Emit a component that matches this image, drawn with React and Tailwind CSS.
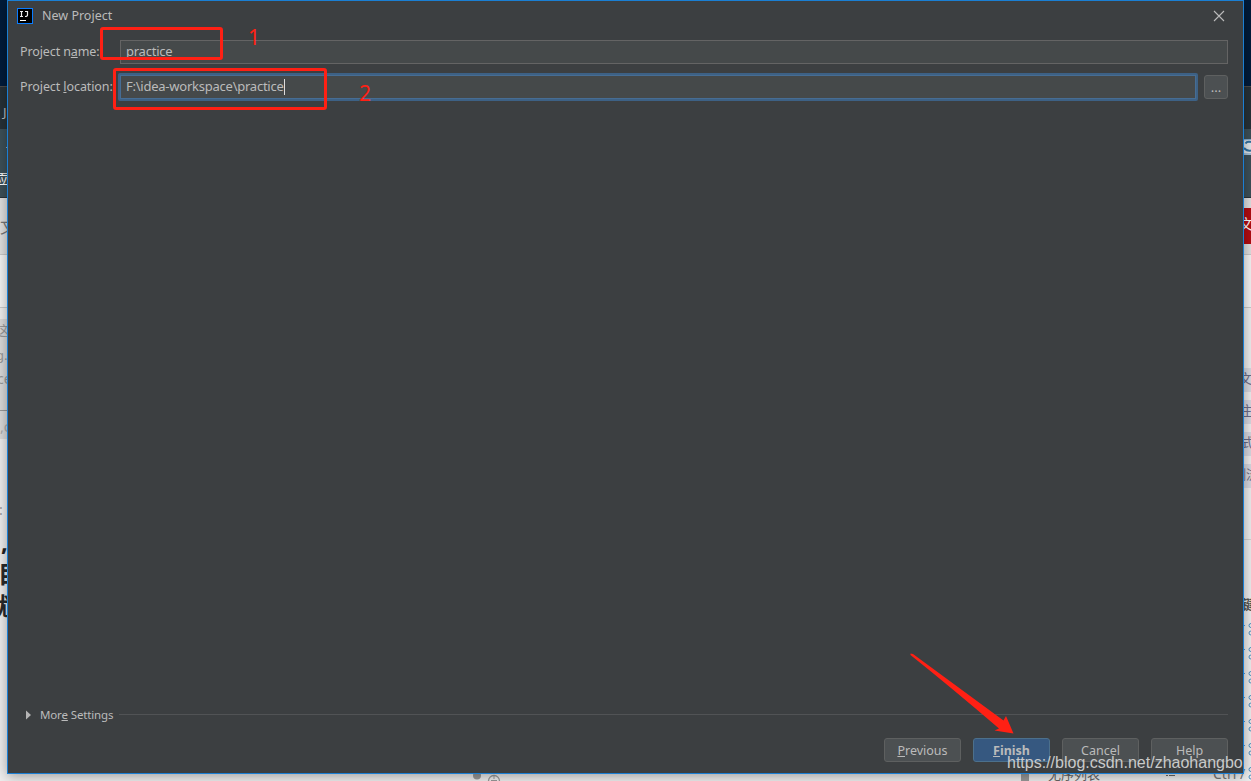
import React, { useState } from "react";

// bands of the browser page behind the dialog
const bands = [
    "h-[86px] bg-[#001b3a]",
    "h-[43px] bg-[#263137] border-t border-[#4a4a4a]",
    "h-[68px] bg-[#3d5058]",
    "h-px bg-[#2a3338]",
    "h-[56px] bg-[#e0e0e0]",
    "h-[53px] bg-[#f4f4f4] border-t border-[#c9c9c9]",
    "h-[474px] bg-[#eeeeee] border-t border-[#cacaca]",
];

// bits of page text that stick out on both sides
const pieces = [
    { text: "J", cls: "left-[3px] top-[104px] text-[13px] text-[#b8bcbe]" },
    { text: "应", cls: "left-[-5px] top-[171px] text-[13px] text-white" },
    { text: "文", cls: "left-[0px] top-[219px] text-[17px] text-[#777]" },
    { text: "这", cls: "left-[-4px] top-[322px] text-[13px] text-[#999]" },
    { text: "g.", cls: "left-[-4px] top-[347px] text-[13px] text-[#999]" },
    { text: "ce", cls: "left-[-3px] top-[371px] text-[14px] text-[#999]" },
    { text: ",c", cls: "left-[0px] top-[419px] text-[14px] text-[#aaa]" },
    { text: ":", cls: "left-[-1px] top-[502px] text-[14px] text-[#999]" },
    { text: ",", cls: "left-[1px] top-[534px] text-[24px] font-bold text-[#222]" },
    { text: "目", cls: "left-[-2px] top-[566px] text-[24px] font-bold text-[#2a2a2a]" },
    { text: "就", cls: "left-[-14px] top-[598px] text-[24px] font-bold text-[#2a2a2a]" },
    { text: "文", cls: "left-[1239px] top-[216px] text-[14px] text-white" },
    { text: "文", cls: "left-[1239px] top-[370px] text-[13px] text-[#6b6b85]" },
    { text: "注", cls: "left-[1239px] top-[402px] text-[13px] text-[#6b6b85]" },
    { text: "式", cls: "left-[1241px] top-[434px] text-[13px] text-[#6b6b85]" },
    { text: "测", cls: "left-[1233px] top-[466px] text-[13px] text-[#6b6b85]" },
    { text: "流", cls: "left-[1246px] top-[466px] text-[13px] text-[#6b6b85]" },
    { text: "键", cls: "left-[1242px] top-[596px] text-[13px] font-bold text-[#555]" },
    { text: "无序列表", cls: "left-[1048px] top-[766px] text-[13px] text-[#666]" },
    { text: "Ctrl /", cls: "left-[1213px] top-[766px] text-[14px] text-[#777]" },
];

const links = [
    "top-[622px]",
    "top-[646px]",
    "top-[670px]",
    "top-[694px]",
    "top-[718px]",
    "top-[742px]",
    "top-[766px]",
];

function Backdrop() {
    return (
        <div className="absolute inset-0 overflow-hidden whitespace-nowrap leading-4">
            <div className="flex h-full flex-col">
                {bands.map((b) => (
                    <div key={b} className={`shrink-0 ${b}`} />
                ))}
            </div>
            <div className="absolute left-0 top-[319px] h-[120px] w-2 bg-[#dadada]" />
            <div className="absolute left-0 top-[410px] h-px w-2 bg-[#999]" />
            <div className="absolute left-0 top-[173px] h-px w-2 bg-[#d8dcdd]" />
            <div className="absolute left-0 top-[184px] h-px w-2 bg-[#d8dcdd]" />
            <div className="absolute left-[6px] top-[147px] h-px w-2 bg-[#a2abae]" />
            <div className="absolute left-[1244px] top-[208px] h-9 w-2 bg-[#b20c12]" />
            <div className="absolute left-[1244px] top-[368px] h-6 w-2 bg-[#d7d9e0]" />
            <div className="absolute left-[1244px] top-[400px] h-6 w-2 bg-[#d7d9e0]" />
            <div className="absolute left-[1244px] top-[432px] h-6 w-2 bg-[#d7d9e0]" />
            <div className="absolute left-[1244px] top-[464px] h-6 w-2 bg-[#d7d9e0]" />
            <div className="absolute left-[1244px] top-[539px] h-px w-2 bg-[#d3d3d3]" />
            <svg className="absolute left-[1244px] top-[139px]" width="7" height="16">
                <path d="M0 0h7v16H0z" fill="#dfe6ea" />
                <path d="M0 .7h7M0 15h7" stroke="#6d9bc2" strokeWidth="1" />
                <path d="M7 3Q3 2 1.5 4.5M0 9Q3 12.5 7 11.5" fill="none" stroke="#33719f" strokeWidth="2" />
            </svg>
            {pieces.map((p) => (
                <span key={p.cls} className={`absolute ${p.cls}`}>
                    {p.text}
                </span>
            ))}
            {links.map((top) => (
                <svg key={top} className={`absolute left-[1243px] ${top}`} width="8" height="16" fill="none">
                    <path d="M0 3.5h2" stroke="#5599d0" />
                    <circle cx="8" cy="3.5" r="2" stroke="#4f8fc0" />
                    <circle cx="8" cy="11" r="2" stroke="#4f8fc0" />
                </svg>
            ))}
            <svg className="absolute left-[472px] top-[771px]" width="30" height="10" fill="none">
                <circle cx="5" cy="4.5" r="4" fill="#999" />
                <circle cx="22" cy="10" r="5.5" stroke="#999" strokeWidth="1.3" />
                <path d="M22 4v4M19 9.5h6" stroke="#999" />
            </svg>
            <div className="absolute left-[1021px] top-[770px] h-3 w-2 bg-[#999]" />
            <svg className="absolute left-[1165px] top-[774px]" width="12" height="5" stroke="#666">
                <path d="M1 1.5h2M4 1.5h6" />
            </svg>
        </div>
    );
}

function DialogButton({ primary, children }) {
    return (
        <button
            className={
                "h-6 w-[77px] rounded-[3px] border pt-px text-[12.5px] leading-[22px] " +
                (primary
                    ? "border-[#4c708c] bg-[#365880] font-bold text-[#bbbbbb]"
                    : "border-[#5e6060] bg-[#4c5052] text-[#bbbbbb]")
            }
        >
            {children}
        </button>
    );
}

// red marks drawn over the dialog
function Annotations() {
    return (
        <>
            <div className="absolute left-[100px] top-[27px] h-[33px] w-[123px] rounded-[3px] border-3 border-[#ff2014]" />
            <div className="absolute left-[113px] top-[68px] h-[42px] w-[214px] rounded-[3px] border-3 border-[#ff2014]" />
            <span className="absolute left-[248px] top-[25px] text-[21px] leading-6 text-[#ff2014]">1</span>
            <span className="absolute left-[359px] top-[81px] text-[21px] leading-6 text-[#ff2014]">2</span>
            <svg className="absolute left-[908px] top-[650px]" width="110" height="88">
                <path
                    d="M2.5 3.5L5 4L95.5 70.5L98 66L105.5 83.5L86.5 80.5L91 78.5Q45 39 2.5 5Z"
                    fill="#ff2014"
                />
            </svg>
        </>
    );
}

export default function App() {
    const [name, setName] = useState("practice");
    const [location, setLocation] = useState("F:\\idea-workspace\\practice");

    return (
        <div className="relative h-[781px] w-[1251px] overflow-hidden font-['Noto_Sans','Noto_Sans_CJK_SC',sans-serif]">
            <Backdrop />

            <div className="absolute left-[7px] top-0 flex h-[774px] w-[1237px] flex-col border border-[#1a7fd4] bg-[#3c3f41] text-[13px] text-[#bbbbbb] shadow-[0_2px_12px_rgba(0,0,0,0.35)]">
                <header className="flex h-[29px] items-center pl-[9px] pr-[18px]">
                    <svg width="16" height="16" fill="none">
                        <rect x=".5" y=".5" width="15" height="15" fill="#000" stroke="#0a7cff" />
                        <path d="M3 3.5h3M4.5 3.5v5M3 8.5h3M8 3.5h3M10.5 3v4q0 1.5-2.5 1.5" stroke="#eee" strokeWidth="1.2" />
                        <path d="M3 12.5h6" stroke="#fff" />
                    </svg>
                    <span className="ml-[9px] pt-[2px] text-[12.5px]">New Project</span>
                    <svg className="ml-auto" width="12" height="12" stroke="#bbb" strokeWidth="1.1">
                        <path d="M1 1l10 10M11 1L1 11" />
                    </svg>
                </header>

                <main className="flex flex-1 flex-col pl-3 pr-[15px]">
                    <div className="mt-[10px] flex h-6 items-center">
                        <label className="w-[100px] whitespace-nowrap text-[12.5px] tracking-[-0.11px]">
                            Project n<u>a</u>me:
                        </label>
                        <input
                            className="h-6 flex-1 border border-[#646464] bg-[#45494a] px-[5px] pb-[2px] tracking-[-0.24px] outline-none"
                            value={name}
                            onChange={(e) => setName(e.target.value)}
                        />
                    </div>
                    <div className="mt-[9px] flex h-7 items-center">
                        <label className="w-[98px] whitespace-nowrap text-[12.5px] tracking-[-0.09px]">
                            Project <u>l</u>ocation:
                        </label>
                        <div className="flex h-7 flex-1 items-center rounded-[2px] border-2 border-[#3d6185] bg-[#45494a]">
                            <div className="flex h-6 flex-1 items-center border border-[#466d94] pl-[5px]">
                                <span className="tracking-[-0.24px]" onClick={() => setLocation(location)}>
                                    {location}
                                </span>
                                <span className="h-4 w-px bg-[#dddddd]" />
                            </div>
                        </div>
                        <button className="ml-[6px] h-6 w-6 rounded-[3px] border border-[#5e6060] bg-[#4c5052] leading-5">
                            ...
                        </button>
                    </div>

                    <div className="mt-auto flex h-5 items-center">
                        <svg className="ml-[5px]" width="7" height="10">
                            <path d="M1 .5l5 4.5-5 4.5z" fill="#b5b5b5" />
                        </svg>
                        <span className="ml-2 w-[73px] whitespace-nowrap text-[11.5px] tracking-[-0.14px]">
                            Mor<u>e</u> Settings
                        </span>
                        <div className="mb-[2px] ml-[6px] h-px flex-1 bg-[#515355]" />
                    </div>

                    <footer className="mb-[11px] mt-[13px] flex justify-end gap-3">
                        <DialogButton>
                            <u>P</u>revious
                        </DialogButton>
                        <DialogButton primary>
                            <u>F</u>inish
                        </DialogButton>
                        <DialogButton>Cancel</DialogButton>
                        <DialogButton>Help</DialogButton>
                    </footer>
                </main>
            </div>

            <Annotations />

            <span className="absolute left-[1007px] top-[754px] whitespace-nowrap font-['Liberation_Sans',Arial,sans-serif] text-[16px] leading-[18px] text-[#c9caca]">
                https://blog.csdn.net/zhaohangbo
            </span>
        </div>
    );
}
